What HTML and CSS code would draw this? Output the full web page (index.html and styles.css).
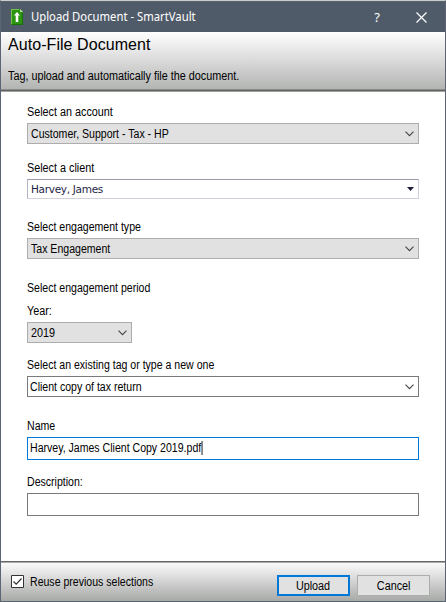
FILE: index.html
```html
<!DOCTYPE html>
<html lang="en">
<head>
<meta charset="utf-8">
<title>Upload Document - SmartVault</title>
<link rel="stylesheet" href="styles.css">
</head>
<body>
<main class="window">
  <div class="titlebar">
    <svg class="app-icon" width="12" height="16" viewBox="0 0 12 16"><path d="M0 0h9l3 3v13H0z" fill="#2c9411"/><path d="M0 0h8v1H1v14H0z" fill="#75c34f"/><path d="M9 0v3h3z" fill="#b7dda7"/><path d="M11 4h1v12H1v-1h10z" fill="#16730a"/><path d="M6 3 9 6.5H7.3V13H4.7V6.5H3z" fill="#fff"/></svg>
    <span class="window-title">Upload Document - SmartVault</span>
    <span class="help">?</span>
    <svg class="close" width="11" height="11" viewBox="0 0 11 11"><path d="M.5.5l10 10M10.500.5l-10 10" stroke="#fff" stroke-width="1.2"/></svg>
  </div>
  <header class="header">
    <h1>Auto-File Document</h1>
    <p><span class="text wide">Tag, upload and automatically file the document.</span></p>
  </header>
  <form class="form">
    <div class="field account"><label><span class="text wide">Select an account</span></label>
      <div class="control select"><span class="text">Customer, Support - Tax - HP</span><svg class="chev" width="9" height="6" viewBox="0 0 9 6"><path d="M.5.7l4 4 4-4"/></svg></div></div>
    <div class="field client"><label><span class="text wide">Select a client</span></label>
      <div class="control combo"><span class="t-client">Harvey, James</span><svg class="tri" width="7" height="4" viewBox="0 0 7 4"><path d="M0 0h7L3.500 4z"/></svg></div></div>
    <div class="field type"><label><span class="text">Select engagement type</span></label>
      <div class="control select"><span class="text">Tax Engagement</span><svg class="chev" width="9" height="6" viewBox="0 0 9 6"><path d="M.5.7l4 4 4-4"/></svg></div></div>
    <div class="period"><span class="text">Select engagement period</span></div>
    <div class="field year"><label><span class="text wide">Year:</span></label>
      <div class="control select"><span class="text wide">2019</span><svg class="chev" width="9" height="6" viewBox="0 0 9 6"><path d="M.5.7l4 4 4-4"/></svg></div></div>
    <div class="field tag"><label><span class="text">Select an existing tag or type a new one</span></label>
      <div class="control input"><span class="text">Client copy of tax return</span><svg class="chev" width="9" height="6" viewBox="0 0 9 6"><path d="M.5.7l4 4 4-4"/></svg></div></div>
    <div class="field name"><label><span class="text">Name</span></label>
      <div class="control input tall focused"><span class="text editing">Harvey, James Client Copy 2019.pdf</span></div></div>
    <div class="field desc"><label><span class="text">Description:</span></label>
      <div class="control input tall"></div></div>
  </form>
  <footer class="footer">
    <svg class="check" width="13" height="13" viewBox="0 0 13 13"><path d="M.5.5h12v12H.5z" fill="#fff" stroke="#333"/><path d="M2.500 6.500l2.700 2.700 5.300-5.700" fill="none" stroke="#333" stroke-width="1.200"/></svg>
    <span class="text reuse">Reuse previous selections</span>
    <div class="btn primary"><span class="text">Upload</span></div>
    <div class="btn"><span class="text">Cancel</span></div>
  </footer>
</main>
</body>
</html>
```
FILE: styles.css
```css
* { box-sizing: border-box; }
body {
  margin: 0;
  font: 12px/14px "Liberation Sans", Arial, sans-serif;
  color: #000;
  white-space: nowrap;
}
.text {
  display: inline-block;
  transform: scaleX(0.88);
  transform-origin: left center;
}
.wide { transform: scaleX(0.9); }
.window {
  width: 446px;
  height: 602px;
  display: flex;
  flex-direction: column;
  background: #fff;
  border: 1px solid #5c6473;
  border-top-color: #c9cecd;
  overflow: hidden;
}
.titlebar {
  height: 31px;
  flex: none;
  display: flex;
  align-items: center;
  padding-left: 10px;
  background: #505b69;
  border-top: 1px solid #59636c;
  color: #fff;
}
.window-title {
  font: 12px/16px "Noto Sans", sans-serif;
  transform: scaleX(0.94);
  transform-origin: left center;
  margin-left: 8px;
}
.help { margin-left: auto; font: 13px/16px "Noto Sans", sans-serif; }
.close { margin: 0 18px 0 36px; }
.header {
  height: 60px;
  flex: none;
  padding: 3px 7px 0;
  background: linear-gradient(#fff, #afb1af);
  box-shadow: inset 0 -1px #a0a2a0, inset 0 -2px #626462, inset 0 -3px #8b8d8b;
}
.header h1 { margin: 0; font-size: 16px; line-height: 20px; font-weight: 400; letter-spacing: 0.06px; }
.header p { margin: 14px 0 0; }
.form { width: 392px; margin-left: 26px; height: 469px; flex: none; }
.field label { display: block; height: 14px; margin-bottom: 4px; }
.control {
  height: 21px;
  display: flex;
  align-items: center;
  padding: 0 4px 0 2px;
  border: 1px solid #adadad;
}
.select { background: #e1e1e1; padding-left: 3px; }
.combo { height: 20px; color: #1e1e46; border-color: #9a9aaa #d2d2dc #d2d2dc #b5b5c2; }
.input { border-color: #7a7a7a; }
.tall { height: 23px; padding-bottom: 2px; }
.focused { border-color: #0078d7; }
.chev, .tri { margin-left: auto; }
.chev path { fill: none; stroke: #444; stroke-width: 1.1; }
.tri path { fill: #1e1e3c; }
.account { padding-top: 13px; }
.client { margin-top: 17px; }
.type { margin-top: 21px; }
.period { margin-top: 22px; height: 14px; }
.year { margin-top: 9px; width: 105px; }
.tag { margin-top: 15px; }
.name { margin-top: 22px; }
.desc { margin-top: 15px; }
.editing { border-right: 1px solid #000; }
.footer {
  height: 40px;
  flex: none;
  display: flex;
  align-items: flex-start;
  padding: 14px 15px 0 10px;
  background: linear-gradient(#fff, #a7a9a7);
  box-shadow: inset 0 1px #666866, inset 0 2px #a9aba9;
}
.btn {
  width: 73px;
  height: 21px;
  display: flex;
  align-items: center;
  justify-content: center;
  background: #e1e1e1;
  border: 1px solid #adadad;
}
.btn .text { transform: scaleX(0.9); transform-origin: center; }
.primary { border: 2px solid #0078d7; margin: 0 7px 0 auto; }
.reuse { margin-left: 6px; }
.t-client { font-family: "DejaVu Sans", sans-serif; font-size: 10.5px; letter-spacing: -0.3px; padding-left: 1px; }
```
